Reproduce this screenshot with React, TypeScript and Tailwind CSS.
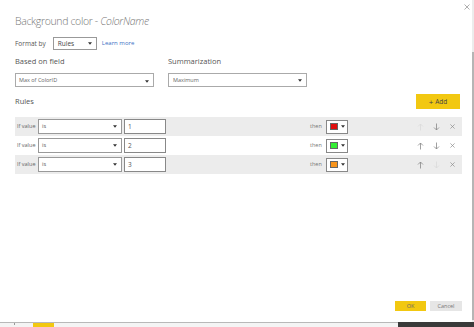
import React from "react";

const Caret = ({ className = "" }: { className?: string }) => (
  <svg width="4" height="3" viewBox="0 0 4 3" className={className}>
    <path d="M0 0.3 L4 0.3 L2 2.8 Z" fill="#333" />
  </svg>
);

const ArrowUp = ({ color }: { color: string }) => (
  <svg width="7" height="8" viewBox="0 0 7 8">
    <path d="M3.5 7.5 V1 M1 3.5 L3.5 1 L6 3.5" stroke={color} strokeWidth="0.8" fill="none" />
  </svg>
);
const ArrowDown = ({ color }: { color: string }) => (
  <svg width="7" height="8" viewBox="0 0 7 8">
    <path d="M3.5 0.5 V7 M1 4.5 L3.5 7 L6 4.5" stroke={color} strokeWidth="0.8" fill="none" />
  </svg>
);
const Cross = ({ color, size = 6 }: { color: string; size?: number }) => (
  <svg width={size} height={size} viewBox="0 0 6 6">
    <path d="M0.5 0.5 L5.5 5.5 M5.5 0.5 L0.5 5.5" stroke={color} strokeWidth="0.8" fill="none" />
  </svg>
);

type Rule = { v: string; color: string; bg: string; up: boolean; down: boolean };
const rules: Rule[] = [
  { v: "1", color: "#e01010", bg: "bg-[#ececec]", up: false, down: true },
  { v: "2", color: "#33ee33", bg: "bg-white", up: true, down: true },
  { v: "3", color: "#f7941d", bg: "bg-[#ececec]", up: true, down: false },
];

export default function App() {
  return (
    <div className="w-[474px] h-[327px] flex flex-col bg-white overflow-hidden font-['Open_Sans',sans-serif] text-[#444]">
      <div className="flex-1 flex relative min-h-0">
        <div className="flex-1 flex flex-col pl-[15px] pr-[10px]">
          <div className="absolute left-[464px] top-[4px]">
            <Cross color="#999" size={6} />
          </div>
          <div className="mt-[11px] h-[20px] leading-[20px] text-[10.5px] font-light text-[#777] tracking-[-0.35px]">
            Background color - <span className="italic">ColorName</span>
          </div>
          <div className="mt-[6px] h-[13px] flex items-center text-[6.5px]">
            <span className="text-[#555]">Format by</span>
            <div className="ml-[7px] w-[44px] h-[13px] border border-[#999] flex items-center justify-between px-[4px]">
              <span>Rules</span>
              <Caret />
            </div>
            <span className="ml-[5px] text-[6px] text-[#3a70c4]">Learn more</span>
          </div>
          <div className="mt-[6px] h-[12px] flex items-center text-[7.5px] text-[#555]">
            <span className="w-[153px]">Based on field</span>
            <span>Summarization</span>
          </div>
          <div className="mt-[5px] h-[14px] flex text-[5.5px]">
            <div className="w-[139px] h-[14px] border border-[#aaa] flex items-center justify-between pl-[3px] pr-[4px]">
              <span className="text-[#666]">Max of ColorID</span>
              <Caret className="mt-[2px]" />
            </div>
            <div className="ml-[14px] w-[139px] h-[14px] border border-[#aaa] flex items-center justify-between pl-[4px] pr-[4px]">
              <span className="text-[#666]">Maximum</span>
              <Caret />
            </div>
          </div>
          <div className="mt-[7px] h-[15px] flex items-center justify-between">
            <span className="text-[7.5px] text-[#555]">Rules</span>
            <div className="w-[44px] h-[15px] mr-[2px] bg-[#f2c811] flex items-center justify-center text-[6.5px] text-[#444]">
              <span className="mr-[2px] text-[8px] leading-none">+</span>Add
            </div>
          </div>
          <div className="mt-[8px] flex flex-col">
            {rules.map((r, i) => (
              <div key={i} className={`h-[19px] flex items-center ${r.bg} text-[5.5px]`}>
                <span className="ml-[2px] w-[21px] text-[#666]">If value</span>
                <div className="w-[84px] h-[15px] bg-white border border-[#999] flex items-center justify-between pl-[3px] pr-[4px]">
                  <span className="text-[#555]">is</span>
                  <Caret />
                </div>
                <div className="ml-[2px] w-[42px] h-[15px] bg-white border border-[#888] flex items-center pl-[3px] text-[6.5px] text-[#555]">
                  {r.v}
                </div>
                <span className="ml-[144px] w-[16px] text-[#777]">then</span>
                <div className="w-[22px] h-[14px] bg-white border border-[#888] flex items-center pl-[3px]">
                  <div className="w-[8px] h-[7px] border border-[#666]" style={{ backgroundColor: r.color }} />
                  <Caret className="ml-[3px]" />
                </div>
                <div className="ml-[64px] flex items-center">
                  <div className="w-[16px] flex justify-center">
                    <ArrowUp color={r.up ? "#888" : "#dadada"} />
                  </div>
                  <div className="w-[16px] flex justify-center">
                    <ArrowDown color={r.down ? "#888" : "#dadada"} />
                  </div>
                  <div className="w-[16px] flex justify-center">
                    <Cross color="#888" size={5} />
                  </div>
                </div>
              </div>
            ))}
          </div>
          <div className="mt-auto mb-[11px] flex justify-end gap-[4px] text-[5.5px]">
            <div className="w-[31px] h-[10px] bg-[#f2c811] flex items-center justify-center text-[#666]">OK</div>
            <div className="w-[32px] h-[10px] bg-[#e6e6e6] flex items-center justify-center text-[#777]">Cancel</div>
          </div>
        </div>
        <div className="w-[2px] bg-[#ececec] flex flex-col">
          <div className="mt-[52px] h-[268px] bg-[#b5b5b5]" />
        </div>
      </div>
      <div className="h-[5px] flex">
        <div className="w-[398px] border-t border-[#b8b8b8] bg-[#f4f4f4] flex">
          <div className="ml-[14px] w-[1px] h-[2px] bg-[#999]" />
          <div className="ml-[18px] w-[21px] h-full bg-[#f2c811]" />
        </div>
        <div className="flex-1 bg-[#3a3a3a]" />
      </div>
    </div>
  );
}
